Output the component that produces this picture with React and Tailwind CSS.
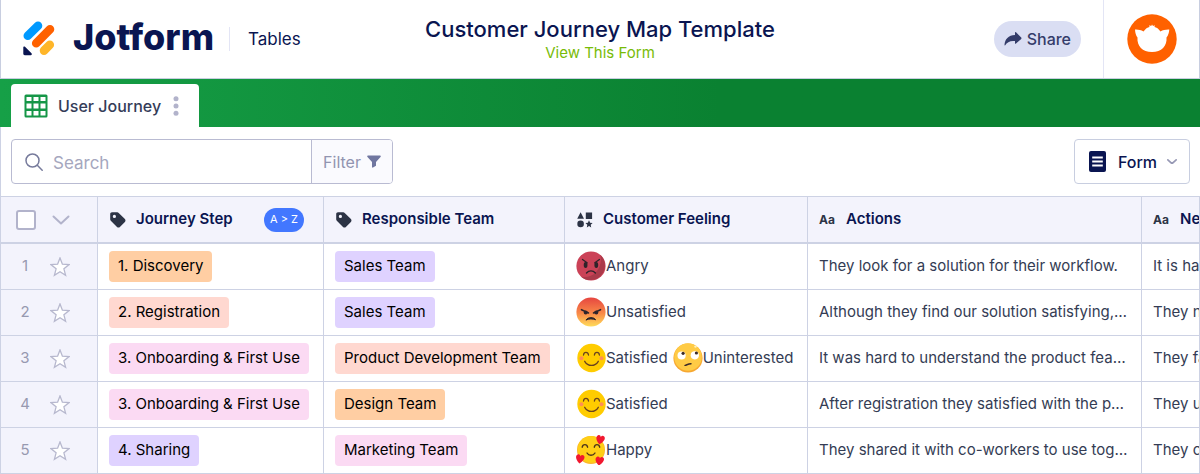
import { useState } from "react";

const columns = [
  { name: "Journey Step", type: "tag", sorted: true },
  { name: "Responsible Team", type: "tag" },
  { name: "Customer Feeling", type: "shapes" },
  { name: "Actions", type: "text" },
  { name: "Needs", type: "text" },
];

const tagColors = {
  orange: "bg-[#ffcea3]",
  salmon: "bg-[#ffd8d0]",
  pink: "bg-[#fbdaf3]",
  purple: "bg-[#dfd2ff]",
};

const rows = [
  { step: ["1. Discovery", "orange"], team: ["Sales Team", "purple"], feelings: ["Angry"], action: "They look for a solution for their workflow.", need: "It is hard" },
  { step: ["2. Registration", "salmon"], team: ["Sales Team", "purple"], feelings: ["Unsatisfied"], action: "Although they find our solution satisfying,…", need: "They need" },
  { step: ["3. Onboarding & First Use", "pink"], team: ["Product Development Team", "salmon"], feelings: ["Satisfied", "Uninterested"], action: "It was hard to understand the product fea…", need: "They fail" },
  { step: ["3. Onboarding & First Use", "pink"], team: ["Design Team", "orange"], feelings: ["Satisfied"], action: "After registration they satisfied with the p…", need: "They use" },
  { step: ["4. Sharing", "purple"], team: ["Marketing Team", "pink"], feelings: ["Happy"], action: "They shared it with co-workers to use tog…", need: "They can" },
];

const LogoMark = () => (
  <svg width="32" height="36" viewBox="0 0 32 36" fill="none" strokeWidth="8.6" strokeLinecap="round" aria-hidden="true">
    <path d="M4.8 14.8 15 4.8" stroke="#0099ff" />
    <path d="M13.2 22.2 27 8.2" stroke="#ff6100" />
    <path d="M21 29.6 26.8 23.8" stroke="#ffb629" />
    <path d="M.3 26.5c0-1 1-1.4 1.7-.7l6.5 6.5c.8.8.2 1.9-.7 1.9H1.8C.9 34.2.3 33.6.3 32.8Z" fill="#0a1551" />
  </svg>
);

const Avatar = () => (
  <svg width="50" height="50" viewBox="0 0 50 50" aria-hidden="true">
    <circle cx="25" cy="25" r="24.7" fill="#ff6100" />
    <path d="M8 15.5C11 15.3 14 16 16.5 17.4 18.500 14.500 20.500 13.300 22.500 12.900L22.200 11.200 24.200 12.100 25 10.600 26 12 27.800 11.300 27.500 12.900C29.500 13.300 31.500 14.500 33.500 17.400 36 16 39 15.300 42.300 15.500 42 19 41.200 21.500 39.500 23.500 40.300 32 34.500 38 25 38S9.700 32 10.500 23.500C9 21.500 8.200 19 8 15.500Z" fill="#fff" />
  </svg>
);

const TagIcon = () => (
  <svg className="shrink-0" width="18" height="18" viewBox="0 0 18 18" aria-hidden="true">
    <path fillRule="evenodd" d="M3 1.3h5.2c.6 0 1.1.2 1.5.6l6.2 6.2c.8.8.8 2.1 0 2.9l-5 5c-.8.8-2.1.8-2.9 0L1.8 9.8c-.4-.4-.6-.9-.6-1.5V3.1c0-1 .8-1.8 1.8-1.8Zm2.4 2.5a1.6 1.6 0 1 0 0 3.2 1.6 1.6 0 0 0 0-3.2Z" fill="#2c3345" />
  </svg>
);

const ShapesIcon = () => (
  <svg className="shrink-0" width="18" height="18" viewBox="0 0 18 18" fill="#2c3345" aria-hidden="true">
    <path d="M4.6 1.300 8 7.800H1.200ZM9.800 1.600h6.300v6.300H9.800Z" />
    <circle cx="4.6" cy="12.9" r="3.3" />
    <path d="m13 9.300 1.100 2.400 2.500.3-1.900 1.800.5 2.600-2.200-1.300-2.200 1.300.5-2.600L9.400 12l2.500-.3Z" />
  </svg>
);

const Chevron = ({ className }) => (
  <svg className={className} viewBox="0 0 18 10" fill="none" stroke="currentColor" strokeLinecap="round" strokeLinejoin="round" aria-hidden="true">
    <path d="m1.500 1.500 7.500 7 7.500-7" />
  </svg>
);

const ColumnIcon = ({ type }) => {
  if (type === "tag") return <TagIcon />;
  if (type === "shapes") return <ShapesIcon />;
  return <span className="w-[18px] shrink-0 text-xs leading-4 font-bold text-[#2c3345]">Aa</span>;
};

const heart = "M0 5.2C-4 2.4-4.4-1-2.6-2.2-1.4-3-.3-2.3 0-1.2.5-2.4 1.7-2.9 2.8-2.2 4.7-.9 3.6 2.500 0 5.2Z";

const Emoji = ({ name }) => (
  <svg className="mb-0.5 shrink-0" width="30" height="30" viewBox="0 0 30 30" fill="none" strokeLinecap="round" aria-hidden="true">
    {name === "Angry" && (
      <>
        <circle cx="15" cy="15" r="14.6" fill="#cb4257" />
        <path d="M24.500 4A14.600 14.600 0 0 1 5 25.700C17 28 27 18 24.500 4Z" fill="#aa3a4a" />
        <path d="m6.500 8.500 4.600 3.300m12.300-3.300-4.600 3.300" stroke="#30232a" strokeWidth="1.3" />
        <ellipse cx="9.6" cy="14" rx="1.9" ry="2.9" fill="#30232a" />
        <ellipse cx="20.3" cy="14" rx="1.9" ry="2.9" fill="#30232a" />
        <path d="M10.500 22c2.400-2.800 6.500-2.800 8.900 0" stroke="#30232a" strokeWidth="1.4" />
      </>
    )}
    {name === "Unsatisfied" && (
      <>
        <defs>
          <linearGradient id="mad" x1="0" y1="0" x2="0" y2="1">
            <stop offset="0" stopColor="#e64540" />
            <stop offset=".55" stopColor="#f98a48" />
            <stop offset="1" stopColor="#ffdc5a" />
          </linearGradient>
        </defs>
        <circle cx="15" cy="15" r="14.6" fill="url(#mad)" />
        <path d="m5.500 12.700 7 3.300m12-3.300-7 3.300" stroke="#2e252b" strokeWidth="1.6" />
        <circle cx="9.7" cy="15.5" r="2" fill="#2e252b" />
        <circle cx="20.3" cy="15.5" r="2" fill="#2e252b" />
        <path d="M10.300 22.800c1.500-3 7.700-3 9.300 0-2.500-1.200-6.800-1.200-9.300 0Z" fill="#2e252b" stroke="#2e252b" />
      </>
    )}
    {name === "Satisfied" && (
      <>
        <circle cx="15.5" cy="15" r="14.2" fill="#ffcc00" />
        <circle cx="5.4" cy="15.2" r="2" fill="#ff8d57" />
        <circle cx="25.5" cy="15.2" r="2" fill="#ff8d57" />
        <path d="M7.500 12c.4-3.500 4.500-3.500 5 0m5.900 0c.5-3.500 4.600-3.500 5 0M8.700 18.300c3.300 5.500 10.300 5.500 13.600 0" stroke="#69421f" strokeWidth="1.3" />
      </>
    )}
    {name === "Uninterested" && (
      <>
        <circle cx="15" cy="15" r="14.6" fill="#f7a832" />
        <circle cx="15" cy="14" r="13.8" fill="#ffcb45" />
        <circle cx="8.6" cy="12.5" r="4.1" fill="#fff" />
        <circle cx="21.8" cy="12.3" r="4.1" fill="#fff" />
        <circle cx="10.1" cy="10.3" r="1.6" fill="#3c2b28" />
        <circle cx="23.4" cy="10" r="1.6" fill="#3c2b28" />
        <path d="M12 22.400c1.700-.2 2.800-1.700 6-1.700" stroke="#3c2b28" strokeWidth="1.4" />
        <circle cx="22.5" cy="3.6" r="1.2" fill="#fff0bd" />
      </>
    )}
    {name === "Happy" && (
      <>
        <circle cx="15" cy="15" r="14" fill="#fbb72c" />
        <circle cx="15" cy="14.4" r="13.3" fill="#ffcf16" />
        <path d="M6.200 12.200c.6-3.500 4.800-3.500 5.400 0m6.700 0c.6-3.500 4.800-3.500 5.400 0M11 18c1.800 3 6.200 3 8 0" stroke="#4d341c" strokeWidth="1.4" />
        <path d={heart} fill="#f1182f" transform="translate(24.5 3.3) rotate(12) scale(1.15)" />
        <path d={heart} fill="#f1182f" transform="translate(4.2 22.5) rotate(8) scale(1.15)" />
        <path d={heart} fill="#f1182f" transform="translate(23.7 24.6) rotate(8) scale(1.15)" />
      </>
    )}
  </svg>
);

const Tag = ({ label, color }) => (
  <span className={`inline-flex h-[31px] items-center rounded px-[9px] text-black ${tagColors[color]}`}>{label}</span>
);

const Header = () => (
  <header className="grid h-[79px] grid-cols-[1fr_auto_1fr] items-center border-x border-b border-[#c8cee0]">
    <div className="flex items-center pl-[22px]">
      <a href="#" className="flex items-center gap-[18px] text-4xl font-extrabold text-[#0a1551]">
        <LogoMark />
        <span className="pb-1">Jotform</span>
      </a>
      <div className="ml-[15px] flex h-6 items-center border-l border-[#e3e5f5] pt-0.5 pl-[18px] text-[17px] text-[#0a1551]">Tables</div>
    </div>
    <div className="pt-0.5 text-center">
      <h1 className="text-[22px] leading-6 font-medium text-[#0a1551]">Customer Journey Map Template</h1>
      <a href="#" className="mt-0.5 block text-[15px] leading-5 text-[#78bb07]">View This Form</a>
    </div>
    <div className="flex h-full items-center justify-end">
      <button type="button" className="mr-[22px] flex h-9 items-center gap-[5px] rounded-full bg-[#dadef3] px-2.5 font-medium text-[#343c6a]">
        <svg width="18" height="14" viewBox="0 0 18 14" fill="currentColor" aria-hidden="true">
          <path d="M11 .7c0-.6.6-.8 1-.4l5.200 5.300c.4.400.4.900 0 1.300L12 11.600c-.4.400-1 .2-1-.4V9C6.300 8.400 3 10 1.200 13.300c-.2.400-.7.300-.7-.2C.8 7 4.500 3.200 11 2.900Z" />
        </svg>
        Share
      </button>
      <button type="button" aria-label="Account" className="flex h-full w-24 items-center justify-center border-l border-[#e3e5f5]">
        <Avatar />
      </button>
    </div>
  </header>
);

const TabBar = () => (
  <nav className="flex h-12 items-end bg-linear-to-r from-[#16a047] to-[#0a8131] to-60% pl-[11px]">
    <div className="flex h-[43px] items-center rounded-t bg-white pr-5 pl-[13px]">
      <button type="button" className="flex items-center gap-2.5 font-medium text-[#343c58]">
        <svg width="24" height="24" viewBox="0 0 24 24" aria-hidden="true">
          <rect x=".5" y=".5" width="23" height="23" rx="1.5" fill="#159647" />
          <path d="M2.500 3h5v4h-5ZM9.500 3h5v4h-5ZM16.500 3h5v4h-5ZM2.500 9.500h5v5h-5ZM9.500 9.500h5v5h-5ZM16.500 9.500h5v5h-5ZM2.500 17h5v4.500h-5ZM9.500 17h5v4.500h-5ZM16.500 17h5v4.500h-5Z" fill="#fff" />
        </svg>
        User Journey
      </button>
      <button type="button" aria-label="Tab options" className="ml-3 text-[#b2b3cb]">
        <svg width="6" height="20" viewBox="0 0 6 20" fill="currentColor" aria-hidden="true">
          <circle cx="3" cy="2.7" r="2.5" />
          <circle cx="3" cy="10" r="2.5" />
          <circle cx="3" cy="17.3" r="2.5" />
        </svg>
      </button>
    </div>
  </nav>
);

const Toolbar = () => (
  <div className="flex items-center justify-between px-2.5 py-3">
    <div className="flex h-[45px] w-[382px] overflow-hidden rounded border border-[#b9bbd2]">
      <div className="flex min-w-0 flex-1 items-center gap-2.5 pl-[13px]">
        <svg className="shrink-0" width="18" height="18" viewBox="0 0 18 18" fill="none" stroke="#777b9c" strokeWidth="1.5" strokeLinecap="round" aria-hidden="true">
          <circle cx="7.5" cy="7.5" r="6.5" />
          <path d="m12.300 12.300 4.900 4.900" />
        </svg>
        <input type="text" aria-label="Search" placeholder="Search" className="h-full min-w-0 flex-1 pt-0.5 text-[17px] outline-none placeholder:text-[#a5a7be]" />
      </div>
      <button type="button" className="flex w-[81px] items-center justify-center gap-1.5 border-l border-[#b9bbd2] bg-[#fafafe] text-[#9194b0]">
        Filter
        <svg width="14" height="13" viewBox="0 0 14 13" fill="#7076a0" aria-hidden="true">
          <path d="M1.200.5h11.600c.9 0 1.300 1 .7 1.600L9 7v3.700L6 12.600c-.5.300-1 0-1-.6V7L.5 2.100C-.1 1.500.3.500 1.200.5Z" />
        </svg>
      </button>
    </div>
    <button type="button" className="flex h-[45px] items-center rounded border border-[#c8cee0] pr-3 pl-3.5 font-medium text-[#0a1551]">
      <svg width="17" height="21" viewBox="0 0 17 21" aria-hidden="true">
        <rect width="17" height="21" rx="2" fill="#0a1551" />
        <path d="M3.200 6.500h10.600M3.200 10.500h10.600M3.200 14.500h10.600" stroke="#fff" strokeWidth="2" />
      </svg>
      <span className="mr-2.5 ml-3">Form</span>
      <Chevron className="w-2.5 stroke-[3] text-[#9799b5]" />
    </button>
  </div>
);

const headCell = "h-12 border-t border-r border-b-2 border-[#cdd2e4] bg-[#f3f3fc] px-[11px]";
const bodyCell = "h-[46px] overflow-hidden border-r border-b border-[#cdd2e4] px-[11px] whitespace-nowrap";

const DataTable = () => {
  const [starred, setStarred] = useState([]);

  const toggleStar = (i) => setStarred((s) => (s.includes(i) ? s.filter((n) => n !== i) : [...s, i]));

  return (
    <table className="w-full table-fixed border-separate border-spacing-0 text-left text-[15px]">
      <colgroup>
        <col className="w-[97px]" />
        <col className="w-[226px]" />
        <col className="w-[241px]" />
        <col className="w-[243px]" />
        <col className="w-[334px]" />
        <col />
      </colgroup>
      <thead>
        <tr>
          <th className={headCell}>
            <div className="flex items-center gap-4 pl-1">
              <input type="checkbox" aria-label="Select all rows" className="size-5 shrink-0 appearance-none rounded-[3px] border-2 border-[#b2b3cb] bg-white checked:bg-[#4277ff]" />
              <button type="button" aria-label="Row options" className="text-[#b2b3cb]">
                <Chevron className="w-[18px] stroke-2" />
              </button>
            </div>
          </th>
          {columns.map((col) => (
            <th key={col.name} className={`${headCell} overflow-hidden font-semibold whitespace-nowrap text-[#0a1551]`}>
              <div className="flex items-center gap-[9px]">
                <ColumnIcon type={col.type} />
                <span>{col.name}</span>
                {col.sorted && (
                  <button type="button" className="mr-2 ml-auto h-6 rounded-full bg-[#4277ff] px-1.5 text-[11px] font-normal text-white">A &gt; Z</button>
                )}
              </div>
            </th>
          ))}
        </tr>
      </thead>
      <tbody>
        {rows.map((row, i) => (
          <tr key={i} className="text-[#343c54]">
            <td className={`${bodyCell} bg-[#f3f3fc]`}>
              <div className="flex items-center gap-3 text-[#9799b0]">
                <span className="w-[26px] text-center">{i + 1}</span>
                <button type="button" aria-label={`Star row ${i + 1}`} aria-pressed={starred.includes(i)} onClick={() => toggleStar(i)}>
                  <svg width="20" height="20" viewBox="0 0 20 20" fill={starred.includes(i) ? "#ffb629" : "#fff"} stroke="#b7b8ce" strokeWidth="1.3" aria-hidden="true">
                    <path d="m10 .9 2.400 6.300 6.700.4-5.200 4.200 1.700 6.500-5.600-3.600-5.600 3.600 1.700-6.500L.9 7.600l6.700-.4Z" />
                  </svg>
                </button>
              </div>
            </td>
            <td className={bodyCell}><Tag label={row.step[0]} color={row.step[1]} /></td>
            <td className={bodyCell}><Tag label={row.team[0]} color={row.team[1]} /></td>
            <td className={bodyCell}>
              <div className="flex items-center gap-[5px]">
                {row.feelings.map((f) => (
                  <span key={f} className="flex items-center"><Emoji name={f} />{f}</span>
                ))}
              </div>
            </td>
            <td className={bodyCell}>{row.action}</td>
            <td className={bodyCell}>{row.need}</td>
          </tr>
        ))}
      </tbody>
    </table>
  );
};

export default function App() {
  return (
    <div className="bg-white font-['Inter',sans-serif] text-base">
      <Header />
      <TabBar />
      <main className="border-l border-[#cdd2e4]">
        <Toolbar />
        <DataTable />
      </main>
    </div>
  );
}
